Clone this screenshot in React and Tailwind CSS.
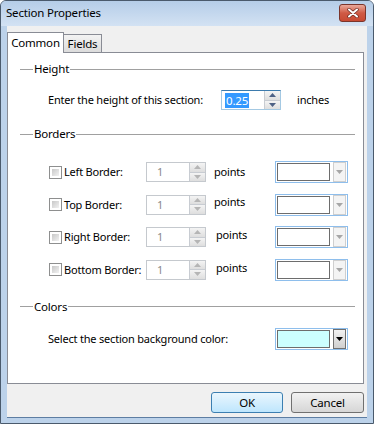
import React from 'react';

const font = { fontFamily: '"Noto Sans", "Open Sans", sans-serif', letterSpacing: '-0.2px' };

const SpinArrows = ({ disabled }) => {
  const arrow = disabled ? '#b5b5b5' : '#4d6185';
  return (
    <div className="flex flex-col w-[16px] h-full border-l border-[#c8ccd2]">
      <div className="flex-1 flex items-center justify-center bg-gradient-to-b from-[#f4f4f4] to-[#dedede] border-b border-[#c8ccd2]">
        <svg width="7" height="4" viewBox="0 0 7 4"><path d="M0 4 L3.5 0 L7 4 Z" fill={arrow} /></svg>
      </div>
      <div className="flex-1 flex items-center justify-center bg-gradient-to-b from-[#f4f4f4] to-[#dedede]">
        <svg width="7" height="4" viewBox="0 0 7 4"><path d="M0 0 L3.5 4 L7 0 Z" fill={arrow} /></svg>
      </div>
    </div>
  );
};

const GroupHeader = ({ title }) => (
  <div className="flex items-center h-[16px]">
    <div className="w-[13px] h-px bg-[#a0a0a0]" />
    <span className="px-[1px] text-[11.5px] leading-[16px] text-black">{title}</span>
    <div className="flex-1 h-px bg-[#a0a0a0]" />
  </div>
);

const ColorPicker = ({ color, enabled }) => (
  <div className="w-[73px] h-[22px] border border-[#8ebeec] flex items-center pl-[1px] pr-[1px]">
    <div className="w-[53px] h-[18px] border border-[#6d6d6d]" style={{ backgroundColor: color }} />
    <div
      className={
        enabled
          ? 'ml-auto w-[13px] h-[20px] border border-[#707070] bg-gradient-to-b from-[#f2f2f2] to-[#cfcfcf] flex items-center justify-center'
          : 'ml-auto w-[13px] h-[20px] border border-[#cfcfcf] bg-[#f4f4f4] flex items-center justify-center'
      }
    >
      <svg width="7" height="4" viewBox="0 0 7 4">
        <path d="M0 0 L3.5 4 L7 0 Z" fill={enabled ? '#000000' : '#a6a6a6'} />
      </svg>
    </div>
  </div>
);

// the "points" caption sits a little higher / further right on some rows
const BorderRow = ({ label, pointsClass }) => (
  <div className="flex items-center h-[22px]">
    <div className="ml-[29px] w-[13px] h-[13px] border border-[#8e8f8f] p-[2px] bg-white">
      <div className="w-full h-full bg-gradient-to-br from-[#c8c8c8] to-[#f2f2f2]" />
    </div>
    <span className="ml-[2px] w-[82px] text-[11px] leading-[16px] text-black whitespace-nowrap">{label}</span>
    <div className="w-[60px] h-[20px] border border-[#c5c9ce] flex bg-white">
      <span className="flex-1 pl-[10px] text-[11px] leading-[18px] text-[#8a8a8a]">1</span>
      <SpinArrows disabled />
    </div>
    <span className={pointsClass}>points</span>
    <ColorPicker color="#ffffff" />
  </div>
);

export default function App() {
  return (
    <div
      className="w-[374px] h-[424px] flex flex-col border border-[#4a5a6c] rounded-t-[6px] overflow-hidden bg-[#bcd2ea]"
      style={font}
    >
      {/* Title bar */}
      <div className="h-[25px] flex items-start bg-gradient-to-b from-[#b5cde8] to-[#d3e2f3]">
        <span className="pl-[5px] pt-[4px] text-[11.5px] leading-[16px] text-black">Section Properties</span>
        <div className="ml-auto mr-[7px] mt-[3px] w-[27px] h-[18px] rounded-[3px] border border-[#7b352b] bg-gradient-to-b from-[#e9a99b] via-[#cf5a45] to-[#c84a33] flex items-center justify-center">
          <svg width="12" height="10" viewBox="0 0 12 10">
            <path d="M2 1.5 L10 8.5 M10 1.5 L2 8.5" stroke="#6b2a22" strokeWidth="3.4" strokeLinecap="round" />
            <path d="M2 1.5 L10 8.5 M10 1.5 L2 8.5" stroke="#ffffff" strokeWidth="2" strokeLinecap="round" />
          </svg>
        </div>
      </div>

      {/* Client area */}
      <div className="flex-1 mx-[6px] mb-[5px] bg-[#f0f0f0] flex flex-col border-b border-[#5d7da2]">
        {/* Tabs */}
        <div className="flex items-end pt-[6px] h-[26px]">
          <div className="relative z-10 w-[57px] h-[21px] -mb-px border border-b-0 border-[#898c95] bg-white flex items-center justify-center text-[11.5px] leading-[16px] text-black">
            Common
          </div>
          <div className="w-[39px] h-[18px] -ml-px border border-b-0 border-[#898c95] bg-gradient-to-b from-[#f3f3f3] to-[#dcdcdc] flex items-center justify-center text-[11.5px] leading-[16px] text-black">
            Fields
          </div>
        </div>

        {/* Panel */}
        <div className="w-[357px] h-[332px] border border-[#898c95] bg-white pt-[8px] pl-[12px] pr-[8px] flex flex-col">
          <GroupHeader title="Height" />
          <div className="mt-[13px] flex items-center h-[20px]">
            <span className="ml-[28px] w-[173px] text-[11px] leading-[16px] text-black whitespace-nowrap">
              Enter the height of this section:
            </span>
            <div className="w-[60px] h-[20px] border border-[#a4c9e3] border-t-[#3d7bad] flex bg-white">
              <div className="flex-1 flex items-center pl-[3px]">
                <span className="bg-[#3399ff] text-white text-[11.5px] leading-[15px] px-[1px]">0.25</span>
              </div>
              <SpinArrows />
            </div>
            <span className="ml-[16px] text-[11px] leading-[16px] text-black">inches</span>
          </div>

          <div className="mt-[16px]">
            <GroupHeader title="Borders" />
          </div>
          <div className="mt-[19px] flex flex-col gap-[10.5px]">
            <BorderRow label="Left Border:" pointsClass="ml-[8px] w-[61px] text-[11px] leading-[16px] text-black" />
            <BorderRow label="Top Border:" pointsClass="ml-[8px] w-[61px] text-[11px] leading-[16px] text-black -mt-[5px]" />
            <BorderRow label="Right Border:" pointsClass="ml-[10px] w-[59px] text-[11px] leading-[16px] text-black -mt-[5px]" />
            <BorderRow label="Bottom Border:" pointsClass="ml-[10px] w-[59px] text-[11px] leading-[16px] text-black -mt-[4px]" />
          </div>

          <div className="mt-[18px]">
            <GroupHeader title="Colors" />
          </div>
          <div className="mt-[14px] flex items-center h-[21px]">
            <span className="ml-[28px] w-[227px] text-[11px] leading-[16px] text-black whitespace-nowrap">
              Select the section background color:
            </span>
            <ColorPicker color="#ccffff" enabled />
          </div>
        </div>

        {/* Buttons */}
        <div className="mt-[8px] flex justify-end gap-[8px] pr-[3px]">
          <button className="w-[72px] h-[21px] rounded-[3px] border border-[#3c7fb1] bg-gradient-to-b from-[#eaf6fd] to-[#bee6fd] text-[11.5px] leading-[16px] text-black">
            OK
          </button>
          <button className="w-[73px] h-[21px] rounded-[3px] border border-[#707070] bg-gradient-to-b from-[#f2f2f2] to-[#d6d6d6] text-[11.5px] leading-[16px] text-black">
            Cancel
          </button>
        </div>
      </div>
    </div>
  );
}
